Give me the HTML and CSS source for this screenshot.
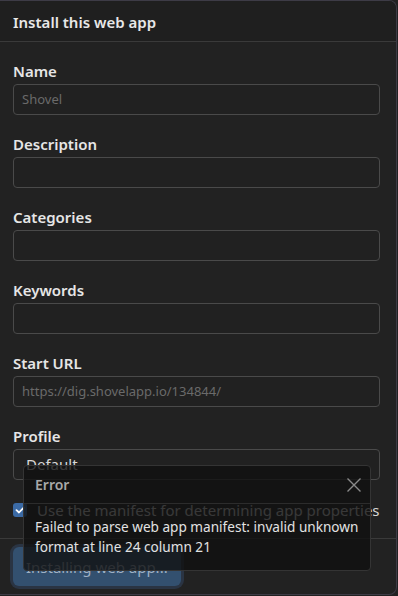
FILE: index.html
```html
<!DOCTYPE html>
<html>
<head>
<meta charset="utf-8">
<link rel="stylesheet" href="styles.css">
</head>
<body>
<div class="dialog">
  <header class="dlg-head">Install this web app</header>
  <div class="dlg-body">
    <div class="field">
      <label class="label">Name</label>
      <div class="input placeholder">Shovel</div>
    </div>
    <div class="field">
      <label class="label">Description</label>
      <div class="input"></div>
    </div>
    <div class="field">
      <label class="label">Categories</label>
      <div class="input"></div>
    </div>
    <div class="field">
      <label class="label">Keywords</label>
      <div class="input"></div>
    </div>
    <div class="field">
      <label class="label">Start URL</label>
      <div class="input placeholder">https://dig.shovelapp.io/134844/</div>
    </div>
    <div class="field">
      <label class="label">Profile</label>
      <div class="input value">Default</div>
    </div>
    <div class="check-row">
      <span class="checkbox"><svg viewBox="0 0 14 14" width="14" height="14"><path d="M3.5 7.2 L6 9.5 L10.5 4.8" fill="none" stroke="#fff" stroke-width="1.8" stroke-linecap="round" stroke-linejoin="round"/></svg></span>
      <span class="check-label">Use the manifest for determining app properties</span>
    </div>
  </div>
  <footer class="dlg-foot">
    <button class="btn">Installing web app...</button>
  </footer>
  <div class="toast">
    <div class="toast-head">
      <span class="toast-title">Error</span>
      <svg class="toast-close" viewBox="0 0 16 16" width="16" height="16"><path d="M1.5 1.5 L14.5 14.5 M14.5 1.5 L1.5 14.5" stroke="#8a8a8a" stroke-width="1.4" fill="none"/></svg>
    </div>
    <div class="toast-body">Failed to parse web app manifest: invalid unknown format at line 24 column 21</div>
  </div>
</div>
</body>
</html>
```
FILE: styles.css
```css
html, body {
  margin: 0;
  padding: 0;
  background: #222222;
}
body {
  font-family: "Noto Sans", "Open Sans", sans-serif;
  color: #e4e4e4;
}
.dialog {
  position: relative;
  width: 397px;
  height: 595px;
  box-sizing: border-box;
  background: #222222;
  border-top: 1px solid #3d3b46;
  border-right: 1px solid #3d3b46;
  border-bottom: 1px solid #3d3b46;
  border-top-right-radius: 8px;
  border-bottom-right-radius: 8px;
  display: flex;
  flex-direction: column;
  overflow: hidden;
}
.dlg-head {
  height: 41px;
  flex: none;
  box-sizing: border-box;
  padding: 8px 13px 0;
  font-size: 15px;
  font-weight: 600;
  line-height: 26px;
  color: #e8e8e8;
  background: #1f1f1f;
  border-bottom: 1px solid #3a3a3a;
}
.dlg-body {
  padding: 19px 16px 0 13px;
  display: flex;
  flex-direction: column;
  gap: 19px;
}
.field {
  display: flex;
  flex-direction: column;
  gap: 3px;
}
.label {
  font-size: 15px;
  font-weight: 600;
  line-height: 20px;
  color: #e6e6e6;
}
.input {
  height: 31px;
  box-sizing: border-box;
  border: 1px solid #4a4a4a;
  border-radius: 4px;
  background: #212121;
  padding: 0 8px;
  font-size: 13px;
  line-height: 29px;
}
.placeholder { color: #6a6a6a; }
.value {
  color: #d8d8d8;
  padding-left: 12px;
  font-size: 15px;
}
.check-row {
  display: flex;
  align-items: center;
  gap: 10px;
  margin-top: -1px;
  height: 24px;
}
.checkbox {
  width: 14px;
  height: 14px;
  border-radius: 3px;
  background: #3b6aa5;
  display: flex;
}
.check-label {
  font-size: 15px;
  color: #d6d6d6;
  white-space: nowrap;
}
.dlg-foot {
  margin-top: auto;
  flex: none;
  border-top: 1px solid #3a3a3a;
  padding: 8px 0 7px 13px;
  height: 56px;
  box-sizing: border-box;
}
.btn {
  height: 39px;
  padding: 0 13px;
  border: none;
  border-radius: 6px;
  background: #33506f;
  color: #9fb0c4;
  font-family: inherit;
  font-size: 15px;
  box-shadow: 0 0 0 3px #2a3443;
}
.toast {
  position: absolute;
  left: 23px;
  top: 464px;
  width: 348px;
  height: 106px;
  box-sizing: border-box;
  background: rgba(16, 16, 16, 0.8);
  border: 1px solid #343434;
  border-radius: 4px;
}
.toast-head {
  height: 38px;
  box-sizing: border-box;
  border-bottom: 1px solid #2c2c2c;
  display: flex;
  align-items: center;
  justify-content: space-between;
  padding: 0 8px 0 11px;
}
.toast-title {
  font-size: 14px;
  font-weight: 600;
  color: #a8a8a8;
}
.toast-body {
  padding: 13px 6px 0 11px;
  font-size: 13.6px;
  line-height: 20px;
  color: #e2e2e2;
}
```
